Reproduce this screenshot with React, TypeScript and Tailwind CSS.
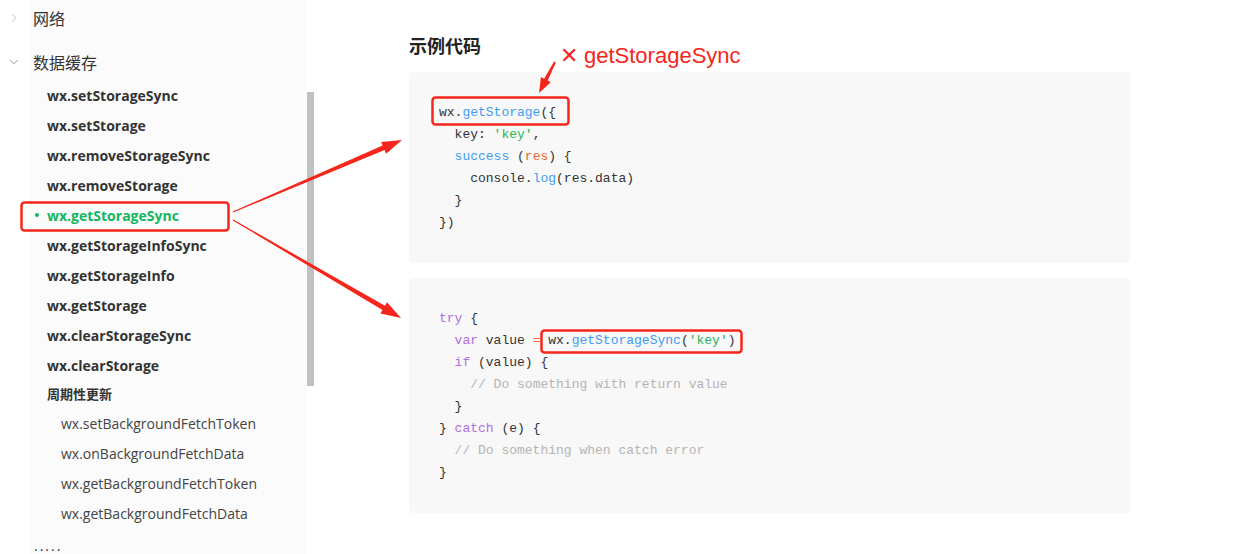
import { ChevronDown, ChevronRight } from 'lucide-react';

const RED = '#f5261c';

const storageApis = [
  'wx.setStorageSync',
  'wx.setStorage',
  'wx.removeStorageSync',
  'wx.removeStorage',
  'wx.getStorageSync',
  'wx.getStorageInfoSync',
  'wx.getStorageInfo',
  'wx.getStorage',
  'wx.clearStorageSync',
  'wx.clearStorage',
];

const fetchApis = [
  'wx.setBackgroundFetchToken',
  'wx.onBackgroundFetchData',
  'wx.getBackgroundFetchToken',
  'wx.getBackgroundFetchData',
];

// tapered arrow: thin tail, thicker shaft, filled head
function arrowPoints(x1: number, y1: number, x2: number, y2: number, w0: number, w1: number, hw: number, hl: number) {
  const len = Math.hypot(x2 - x1, y2 - y1);
  const dx = (x2 - x1) / len;
  const dy = (y2 - y1) / len;
  const nx = -dy;
  const ny = dx;
  const bx = x2 - dx * hl;
  const by = y2 - dy * hl;
  const pts = [
    [x1 + (nx * w0) / 2, y1 + (ny * w0) / 2],
    [bx + (nx * w1) / 2, by + (ny * w1) / 2],
    [bx + (nx * hw) / 2, by + (ny * hw) / 2],
    [x2, y2],
    [bx - (nx * hw) / 2, by - (ny * hw) / 2],
    [bx - (nx * w1) / 2, by - (ny * w1) / 2],
    [x1 - (nx * w0) / 2, y1 - (ny * w0) / 2],
  ];
  return pts.map((p) => p.map((v) => v.toFixed(1)).join(',')).join(' ');
}

function Sidebar() {
  return (
    <div className="flex shrink-0">
      <div className="w-[306px] h-[554px] bg-[linear-gradient(to_right,#ffffff_30px,#fbfbfb_30px)] text-[#333] font-['Open_Sans','Noto_Sans_CJK_SC',sans-serif]">
        <div className="h-[36px] flex items-center pl-[7px]">
          <ChevronRight size={14} strokeWidth={1.5} className="text-[#bbb]" />
          <span className="ml-[12px] text-[16px] font-['Noto_Sans_CJK_SC',sans-serif]">网络</span>
        </div>
        <div className="h-[36px] mt-[8px] flex items-center pl-[7px]">
          <ChevronDown size={14} strokeWidth={1.5} className="text-[#888]" />
          <span className="ml-[12px] text-[16px] font-['Noto_Sans_CJK_SC',sans-serif]">数据缓存</span>
        </div>
        {storageApis.map((name) => {
          const active = name === 'wx.getStorageSync';
          return (
            <div key={name} className="h-[30px] flex items-center pl-[47px] text-[14px] font-bold">
              {active ? (
                <>
                  <span className="-ml-[12px] mr-[8px] w-[4px] h-[4px] rounded-full bg-[#13b760]" />
                  <span className="text-[#13b760]">{name}</span>
                </>
              ) : (
                <span>{name}</span>
              )}
            </div>
          );
        })}
        <div className="h-[28px] flex items-center pl-[47px] text-[13px] font-bold font-['Noto_Sans_CJK_SC',sans-serif]">
          周期性更新
        </div>
        {fetchApis.map((name) => (
          <div key={name} className="h-[30px] flex items-center pl-[61px] text-[14px] text-[#444]">
            {name}
          </div>
        ))}
        <div className="h-[22px] mt-[4px] flex items-end pl-[34px] text-[14px] leading-[16px] tracking-[2px]">.....</div>
      </div>
      <div className="w-[8px] pt-[92px] bg-white">
        <div className="ml-px w-[7px] h-[294px] bg-[#c1c1c1]" />
      </div>
    </div>
  );
}

const c = {
  fn: 'text-[#3f9cf2]',
  str: 'text-[#28b35c]',
  arg: 'text-[#e9673a]',
  kw: 'text-[#b26fe0]',
  cm: 'text-[#b4b4b4]',
};

function CodeBlock({ children }: { children: React.ReactNode }) {
  return (
    <pre className="w-[721px] rounded-[4px] bg-[#f8f8f8] pl-[30px] pt-[30px] pb-[29px] text-[13px] leading-[22px] text-[#333] font-['Liberation_Mono',monospace]">
      {children}
    </pre>
  );
}

function Content() {
  return (
    <div className="flex-1 pl-[95px] pt-[31px]">
      <h3 className="h-[28px] flex items-center text-[18px] font-bold text-[#222] font-['Noto_Sans_CJK_SC',sans-serif]">示例代码</h3>
      <div className="mt-[13px] flex flex-col gap-[15px]">
        <CodeBlock>
          {'wx.'}<span className={c.fn}>getStorage</span>{'({\n'}
          {'  key: '}<span className={c.str}>'key'</span>{',\n'}
          {'  '}<span className={c.fn}>success</span>{' ('}<span className={c.arg}>res</span>{') {\n'}
          {'    console.'}<span className={c.fn}>log</span>{'(res.data)\n'}
          {'  }\n'}
          {'})'}
        </CodeBlock>
        <CodeBlock>
          <span className={c.kw}>try</span>{' {\n'}
          {'  '}<span className={c.kw}>var</span>{' value '}<span className={c.arg}>=</span>{' wx.'}
          <span className={c.fn}>getStorageSync</span>{'('}<span className={c.str}>'key'</span>{')\n'}
          {'  '}<span className={c.kw}>if</span>{' (value) {\n'}
          {'    '}<span className={c.cm}>// Do something with return value</span>{'\n'}
          {'  }\n'}
          {'} '}<span className={c.kw}>catch</span>{' (e) {\n'}
          {'  '}<span className={c.cm}>// Do something when catch error</span>{'\n'}
          {'}'}
        </CodeBlock>
      </div>
    </div>
  );
}

function Annotations() {
  return (
    <div className="absolute inset-0 pointer-events-none">
      <svg width="1247" height="554" className="absolute inset-0">
        <rect x="21.5" y="202.5" width="207" height="28" rx="3" fill="none" stroke={RED} strokeWidth="2.5" />
        <rect x="432.5" y="97.5" width="136" height="27" rx="3" fill="none" stroke={RED} strokeWidth="2.5" />
        <rect x="541.5" y="330.5" width="200" height="22" rx="3" fill="none" stroke={RED} strokeWidth="2.5" />
        <polygon points={arrowPoints(233, 212, 402, 140, 1, 5, 13, 20)} fill={RED} />
        <polygon points={arrowPoints(233, 220, 401, 318, 1, 5, 13, 20)} fill={RED} />
        <polygon points={arrowPoints(555, 62, 539, 93, 2, 4, 11, 15)} fill={RED} />
      </svg>
      <div className="absolute left-[560px] top-[40px] flex items-center h-[30px] text-[22px] font-['Liberation_Sans',sans-serif]" style={{ color: RED }}>
        <span className="text-[22px] mr-[6px]">✕</span>
        <span>getStorageSync</span>
      </div>
    </div>
  );
}

export default function App() {
  return (
    <div className="relative flex w-[1247px] h-[554px] overflow-hidden bg-white">
      <Sidebar />
      <Content />
      <Annotations />
    </div>
  );
}
